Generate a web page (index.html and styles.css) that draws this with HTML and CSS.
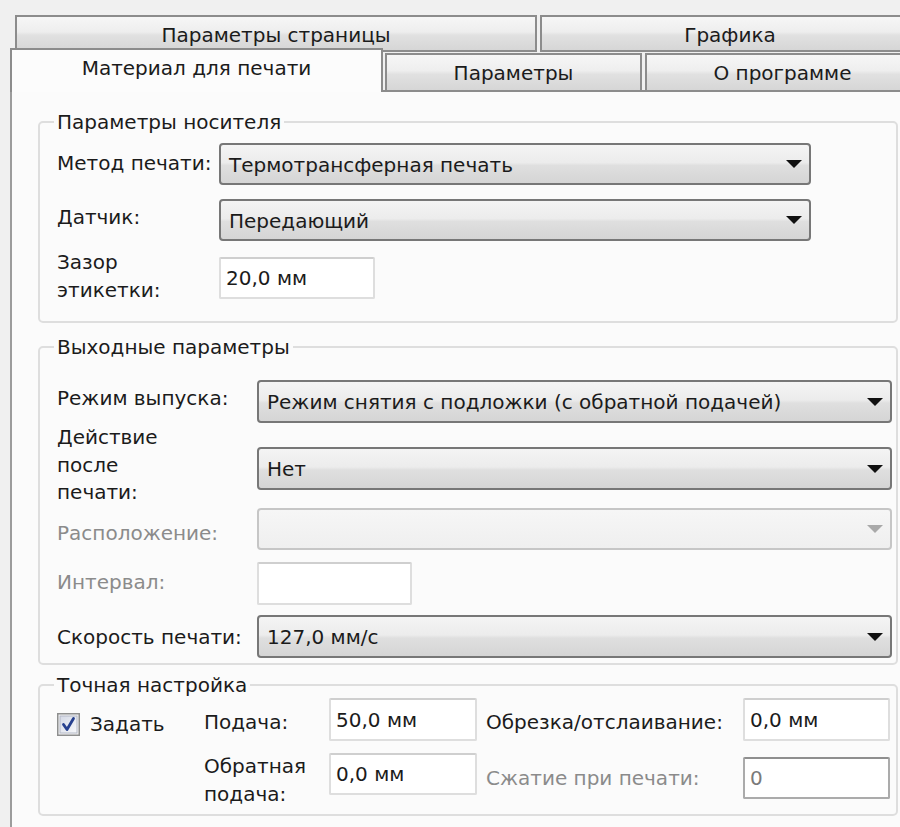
FILE: index.html
```html
<!DOCTYPE html>
<html lang="ru">
<head>
<meta charset="utf-8">
<title>Материал для печати</title>
<link rel="stylesheet" href="styles.css">
</head>
<body>
<div class="dialog">
  <div class="tabrow back">
    <div class="tab t-page">Параметры страницы</div>
    <div class="tab t-graph">Графика</div>
  </div>
  <div class="tabrow front">
    <div class="tab active t-media">Материал для печати</div>
    <div class="tab t-params">Параметры</div>
    <div class="tab t-about">О программе</div>
  </div>
  <div class="panel">
    <fieldset class="group g1">
      <legend>Параметры носителя</legend>
      <div class="row r1">
        <span class="label">Метод печати:</span>
        <div class="combo w-wide1"><span>Термотрансферная печать</span><i class="arrow"></i></div>
      </div>
      <div class="row r2">
        <span class="label">Датчик:</span>
        <div class="combo w-wide1"><span>Передающий</span><i class="arrow"></i></div>
      </div>
      <div class="row r3">
        <span class="label two">Зазор<br>этикетки:</span>
        <div class="field w-short1">20,0 мм</div>
      </div>
    </fieldset>

    <fieldset class="group g2">
      <legend>Выходные параметры</legend>
      <div class="row r1">
        <span class="label">Режим выпуска:</span>
        <div class="combo w-wide2 tall"><span>Режим снятия с подложки (с обратной подачей)</span><i class="arrow"></i></div>
      </div>
      <div class="row r2">
        <span class="label three">Действие<br>после<br>печати:</span>
        <div class="combo w-wide2 tall"><span>Нет</span><i class="arrow"></i></div>
      </div>
      <div class="row r3">
        <span class="label disabled">Расположение:</span>
        <div class="combo w-wide2 off"><span></span><i class="arrow"></i></div>
      </div>
      <div class="row r4">
        <span class="label disabled">Интервал:</span>
        <div class="field w-short2 tall"></div>
      </div>
      <div class="row r5">
        <span class="label">Скорость печати:</span>
        <div class="combo w-wide2 tall"><span>127,0 мм/с</span><i class="arrow"></i></div>
      </div>
    </fieldset>

    <fieldset class="group g3">
      <legend>Точная настройка</legend>
      <div class="fine">
        <div class="check">
          <svg class="box" width="23" height="23" viewBox="0 0 23 23">
            <defs>
              <linearGradient id="cb" x1="0" y1="0" x2="1" y2="1">
                <stop offset="0" stop-color="#d4d9e6"/>
                <stop offset="1" stop-color="#f7f8fa"/>
              </linearGradient>
            </defs>
            <rect x="0.75" y="0.75" width="21.5" height="21.5" fill="#f4f4f4" stroke="#8e8f8f" stroke-width="1.5"/>
            <rect x="3" y="3" width="17" height="17" fill="url(#cb)" stroke="#b3b8c6" stroke-width="1"/>
            <path d="M6.5 11.5 L10 16.5 L16.5 5.5" fill="none" stroke="#26408f" stroke-width="2.8" stroke-linecap="round" stroke-linejoin="round"/>
          </svg>
          <span>Задать</span>
        </div>
        <span class="label first">Подача:</span>
        <div class="field">50,0 мм</div>
        <span class="label right first">Обрезка/отслаивание:</span>
        <div class="field">0,0 мм</div>

        <span class="label two back-label">Обратная<br>подача:</span>
        <div class="field up">0,0 мм</div>
        <span class="label right disabled squeeze">Сжатие при печати:</span>
        <div class="field dark">0</div>
      </div>
    </fieldset>
  </div>
</div>
</body>
</html>
```

FILE: styles.css
```css
html, body {
  margin: 0;
  padding: 0;
}
body {
  width: 900px;
  height: 827px;
  overflow: hidden;
  background: #f0f0f0;
  font-family: "DejaVu Sans", "Liberation Sans", sans-serif;
  font-size: 20px;
  color: #1b1b1b;
}
.dialog {
  width: 900px;
  height: 827px;
  display: flex;
  flex-direction: column;
}

/* ---------- tabs ---------- */
.tabrow {
  display: flex;
  flex: none;
}
.tabrow.back {
  padding-top: 15px;
  padding-left: 15px;
  height: 37px;
}
.tabrow.front {
  margin-top: -4px;
  padding-left: 10px;
  height: 42px;
  align-items: flex-end;
  position: relative;
  z-index: 2;
}
.tab {
  box-sizing: border-box;
  flex: none;
  display: flex;
  align-items: center;
  justify-content: center;
  border: 2px solid #8c8c8c;
  background: linear-gradient(#f6f6f6 0%, #eeeeee 45%, #e1e1e1 55%, #d6d6d6 100%);
  white-space: nowrap;
}
.tabrow.back .tab {
  height: 37px;
  padding-top: 3px;
}
.t-page { width: 522px; }
.t-graph { width: 380px; margin-left: 3px; }
.tabrow.front .tab {
  height: 37px;
  border-bottom: none;
}
.tab.active {
  width: 373px;
  height: 44px !important;
  margin-bottom: -2px;
  background: #fcfcfc;
  padding-bottom: 6px;
}
.t-params { width: 257px; margin-left: 2px; }
.t-about { width: 275px; margin-left: 3px; }

/* ---------- panel ---------- */
.panel {
  flex: 1;
  box-sizing: border-box;
  width: 890px;
  margin-left: 10px;
  border-top: 2px solid #8c8c8c;
  border-left: 2px solid #9c9c9c;
  background: #fbfbfb;
  padding: 18px 2px 0 26px;
}

.group {
  box-sizing: border-box;
  width: 860px;
  margin: 0;
  border: 2px solid #dedede;
  border-radius: 5px;
  min-inline-size: 0;
}
.group legend {
  padding: 0 3px;
  margin-left: -3px;
  line-height: 24px;
}
.g1 { padding: 9px 0 17px 17px; }
.g2 { padding: 21px 0 5px 17px; margin-top: 12px; }
.g3 { padding: 1px 0 6px 17px; margin-top: 8px; }

.row {
  display: flex;
  align-items: center;
}
.label {
  flex: none;
  line-height: 24px;
  white-space: nowrap;
}
.label.two { line-height: 28px; }
.label.three { line-height: 27.5px; }
.label.disabled { color: #8b8b8b; }

.g1 .label { width: 162px; }
.g2 .label { width: 200px; }

/* group 1 rows */
.g1 .r1 { height: 42px; }
.g1 .r1 .label { margin: -1px 0 1px; }
.g1 .r2 { height: 42px; margin-top: 14px; }
.g1 .r2 .label { margin: -3px 0 3px; }
.g1 .r3 { height: 56px; margin-top: 7px; }
.g1 .r3 .field { margin: 2px 0 -2px; }

/* group 2 rows */
.g2 .r1 { height: 43px; }
.g2 .r1 .label { margin: -4px 0 4px; }
.g2 .r2 { height: 83px; margin-top: 1px; }
.g2 .r2 .combo { margin: 3px 0 -3px; }
.g2 .r3 { height: 42px; margin-top: 1px; }
.g2 .r3 .label { margin: 4px 0 -4px; }
.g2 .r4 { height: 43px; margin-top: 12px; }
.g2 .r4 .label { margin: -2px 0 2px; }
.g2 .r5 { height: 43px; margin-top: 10px; }

/* ---------- combo ---------- */
.combo {
  box-sizing: border-box;
  height: 42px;
  display: flex;
  align-items: center;
  justify-content: space-between;
  border: 2px solid #777777;
  border-radius: 4px;
  background: linear-gradient(#f4f4f4 0%, #ececec 46%, #dfdfdf 54%, #d5d5d5 100%);
  padding: 0 7px 0 8px;
  white-space: nowrap;
}
.combo span { margin-top: 1px; }
.combo.tall { height: 43px; }
.combo.off {
  border-color: #c6c6c6;
  background: linear-gradient(#f6f6f6, #efefef);
}
.arrow {
  flex: none;
  width: 0;
  height: 0;
  border-left: 8px solid transparent;
  border-right: 8px solid transparent;
  border-top: 8px solid #101010;
}
.combo.off .arrow { border-top-color: #a9a9a9; }
.w-wide1 { width: 592px; }
.w-wide2 { width: 635px; }

/* ---------- text field ---------- */
.field {
  box-sizing: border-box;
  height: 42px;
  display: flex;
  align-items: center;
  padding-left: 5px;
  background: #ffffff;
  border: 2px solid #dedede;
  border-top-color: #cfcfcf;
  border-radius: 2px;
  white-space: nowrap;
}
.field.tall { height: 43px; }
.w-short1 { width: 156px; }
.w-short2 { width: 155px; }

/* ---------- fine tuning grid ---------- */
.fine {
  display: grid;
  grid-template-columns: 147px 125px 148px 266px 147px;
  grid-template-rows: 43px 56px;
  row-gap: 11px;
  align-items: center;
}
.fine .field { height: 43px; }
.fine .field.up { align-self: start; height: 42px; margin-top: 1px; }
.fine .field.dark {
  height: 42px;
  border-color: #ababab;
  border-top-color: #8f8f8f;
  color: #7a7a7a;
  margin: -2px 0 2px;
}
.fine .label.first { margin: 2px 0 -2px; }
.fine .label.right { padding-left: 9px; }
.fine .label.squeeze { margin: -2px 0 2px; }
.check {
  grid-row: 1 / span 2;
  align-self: start;
  margin-top: 15px;
  display: flex;
  align-items: center;
  gap: 10px;
}
.check .box { flex: none; }
.check span { margin-top: -1px; }
.back-label { grid-column: 2; }
```
